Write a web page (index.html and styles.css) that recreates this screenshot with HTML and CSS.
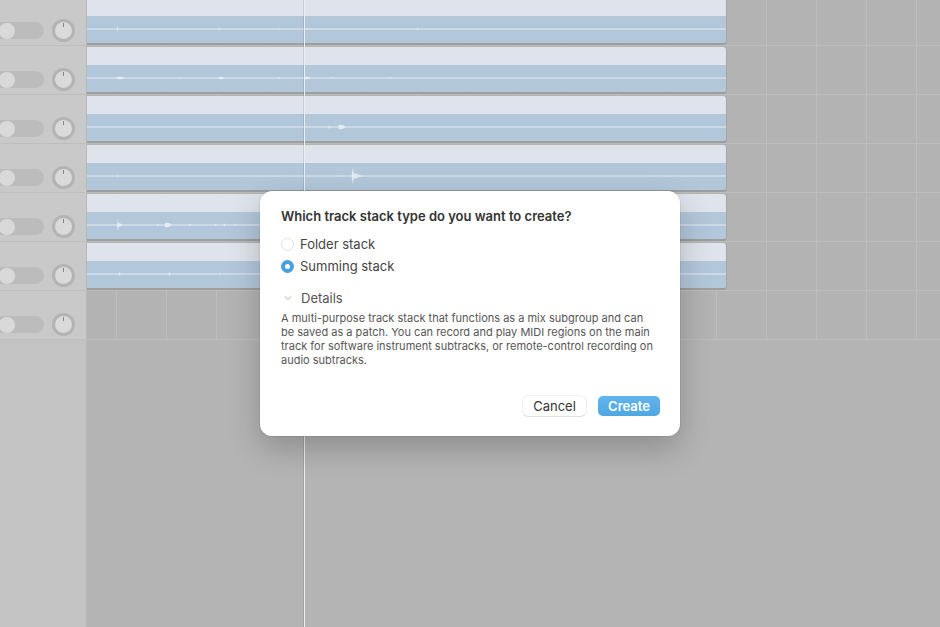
FILE: index.html
```html
<!DOCTYPE html>
<html lang="en">
<head>
  <meta charset="UTF-8">
  <title>Track Stack</title>
  <link rel="stylesheet" href="styles.css">
</head>
<body>
  <div class="app">
    <div class="headers">
      <div class="track-header"><span class="pill"><i></i></span><span class="knob"><i></i></span></div>
      <div class="track-header"><span class="pill"><i></i></span><span class="knob"><i></i></span></div>
      <div class="track-header"><span class="pill"><i></i></span><span class="knob"><i></i></span></div>
      <div class="track-header"><span class="pill"><i></i></span><span class="knob"><i></i></span></div>
      <div class="track-header"><span class="pill"><i></i></span><span class="knob"><i></i></span></div>
      <div class="track-header"><span class="pill"><i></i></span><span class="knob"><i></i></span></div>
      <div class="track-header"><span class="pill"><i></i></span><span class="knob"><i></i></span></div>
    </div>

    <div class="arrange">
      <div class="lanes">
        <div class="lane">
          <div class="region">
            <div class="region-top"></div>
            <svg class="wave" viewBox="0 0 640 27" preserveAspectRatio="none">
              <line x1="0" y1="13" x2="640" y2="13"/>
              <path d="M30 9 L31 13 L30 17 Z M132 11 L133 13 L132 15 Z M192 12 L193 13 L192 14 Z M220 12 L222 13 L220 14 Z M331 11 L332 13 L331 15 Z"/>
            </svg>
          </div>
        </div>
        <div class="lane">
          <div class="region">
            <div class="region-top"></div>
            <svg class="wave" viewBox="0 0 640 27" preserveAspectRatio="none">
              <path d="M30 12 Q34 11 38 13 Q34 15 30 14 Z M93 12 L95 13 L93 14 Z M132 12 Q135 11 138 13 Q135 15 132 14 Z M192 12 L194 13 L192 14 Z M218 12 Q221 11 224 13 Q221 15 218 14 Z M245 12 L247 13 L245 14 Z M303 12 L305 13 L303 14 Z"/>
              <line x1="0" y1="13" x2="640" y2="13"/>
            </svg>
          </div>
        </div>
        <div class="lane">
          <div class="region">
            <div class="region-top"></div>
            <svg class="wave" viewBox="0 0 640 27" preserveAspectRatio="none">
              <line x1="0" y1="13" x2="640" y2="13"/>
              <path d="M242 11 L244 13 L242 15 Z M252 11 Q256 10 259 13 Q256 16 252 15 Z"/>
            </svg>
          </div>
        </div>
        <div class="lane">
          <div class="region">
            <div class="region-top"></div>
            <svg class="wave" viewBox="0 0 640 27" preserveAspectRatio="none">
              <line x1="0" y1="13" x2="640" y2="13"/>
              <path d="M30 11 L31 13 L30 15 Z M254 12 L256 13 L254 14 Z M266 5 L268 13 L266 21 L265 13 Z M268 10 Q272 12 276 13 Q272 14 268 16 Z"/>
            </svg>
          </div>
        </div>
        <div class="lane">
          <div class="region">
            <div class="region-top"></div>
            <svg class="wave" viewBox="0 0 640 27" preserveAspectRatio="none">
              <line x1="0" y1="13" x2="640" y2="13"/>
              <path d="M31 7 L32 13 L31 19 L30 13 Z M32 11 Q35 12 36 13 Q35 14 32 15 Z M70 12 L73 13 L70 14 Z M78 11 Q82 10 85 13 Q82 16 78 15 Z M102 12 L106 13 L102 14 Z M128 12 L131 13 L128 14 Z M137 11 L139 13 L137 15 Z M148 12 L150 13 L148 14 Z"/>
            </svg>
          </div>
        </div>
        <div class="lane">
          <div class="region">
            <div class="region-top"></div>
            <svg class="wave" viewBox="0 0 640 27" preserveAspectRatio="none">
              <line x1="0" y1="13" x2="640" y2="13"/>
              <path d="M32 11 L34 13 L32 15 Z M82 11 L84 13 L82 15 Z M133 11 L134 13 L133 15 Z"/>
            </svg>
          </div>
        </div>
        <div class="lane"></div>
      </div>
      <div class="playhead"></div>
    </div>
  </div>

  <div class="dialog">
    <h1 class="dialog-title">Which track stack type do you want to create?</h1>
    <div class="options">
      <label class="option"><span class="radio"></span>Folder stack</label>
      <label class="option"><span class="radio checked"></span>Summing stack</label>
    </div>
    <div class="details">
      <svg class="chevron" viewBox="0 0 8 6"><path d="M1 1.5 L4 4.5 L7 1.5"/></svg>
      Details
    </div>
    <p class="description">A multi-purpose track stack that functions as a mix subgroup and can be saved as a patch. You can record and play MIDI regions on the main track for software instrument subtracks, or remote-control recording on audio subtracks.</p>
    <div class="buttons">
      <button class="btn">Cancel</button>
      <button class="btn primary">Create</button>
    </div>
  </div>
</body>
</html>
```

FILE: styles.css
```css
body {
  margin: 0;
  width: 940px;
  height: 627px;
  overflow: hidden;
  font-family: Inter, "Liberation Sans", sans-serif;
  background-color: #b4b4b4;
}
.app {
  display: flex;
  height: 627px;
}

/* track headers */
.headers {
  width: 87px;
  flex-shrink: 0;
  background-color: #c3c3c3;
  border-right: 1px solid #b8b8b8;
  box-sizing: border-box;
  overflow: hidden;
}
.track-header {
  height: 49px;
  box-sizing: border-box;
  padding-top: 19px;
  border-bottom: 1px solid #bebebe;
  background-color: #c9c9c9;
  display: flex;
  align-items: center;
  gap: 8px;
}
.track-header:first-child {
  margin-top: -3px;
}
.pill {
  width: 56px;
  height: 17px;
  margin-left: -12px;
  border-radius: 9px;
  background-color: #bcbcbc;
  display: flex;
  align-items: center;
  padding-left: 11px;
  box-sizing: border-box;
}
.pill i {
  width: 16px;
  height: 16px;
  border-radius: 50%;
  background-color: #d9d9d9;
}
.knob {
  width: 23px;
  height: 23px;
  border-radius: 50%;
  background-color: #b4b4b4;
  display: flex;
  align-items: center;
  justify-content: center;
}
.knob i {
  width: 17px;
  height: 17px;
  border-radius: 50%;
  background: linear-gradient(#858585, #858585) no-repeat 50% 1px / 1px 4px, #dadada;
}

/* arrange area */
.arrange {
  flex: 1;
  position: relative;
  overflow: hidden;
}
.lanes {
  margin-top: -3px;
  background-color: #b3b3b3;
  background-image: repeating-linear-gradient(90deg, transparent 0 29px, rgba(255, 255, 255, 0.14) 29px 30px, transparent 30px 50px);
}
.lane {
  height: 49px;
  box-sizing: border-box;
  border-bottom: 1px solid #bcbcbc;
  padding-top: 1px;
}
.region {
  width: 640px;
  height: 47px;
  box-sizing: border-box;
  border-bottom: 2px solid #9e9e9e;
  border-right: 1px solid #a6a6a6;
  border-radius: 0 4px 4px 0;
  background-color: #b3c7db;
  overflow: hidden;
}
.region-top {
  height: 18px;
  background-color: #dfe4ec;
}
.wave {
  display: block;
  width: 100%;
  height: 27px;
}
.wave line {
  stroke: #e4ebf3;
  stroke-width: 1;
}
.wave path {
  fill: #e4ebf3;
}
.playhead {
  position: absolute;
  top: 0;
  bottom: 0;
  left: 217px;
  width: 1px;
  background-color: #eeeeee;
  box-shadow: -1px 0 0 rgba(0, 0, 0, 0.1);
}

/* dialog */
.dialog {
  position: absolute;
  left: 260px;
  top: 191px;
  width: 420px;
  height: 245px;
  box-sizing: border-box;
  padding: 17px 20px 20px 21px;
  background-color: #ffffff;
  border-radius: 12px;
  box-shadow: 0 12px 32px rgba(0, 0, 0, 0.22), 0 0 0 1px rgba(0, 0, 0, 0.06);
  display: flex;
  flex-direction: column;
  color: #3d3d3d;
}
.dialog-title {
  margin: 0;
  font-size: 13px;
  line-height: 16px;
  font-weight: 600;
  color: #333333;
}
.options {
  margin-top: 12px;
  display: flex;
  flex-direction: column;
  gap: 6px;
}
.option {
  display: flex;
  align-items: center;
  gap: 6px;
  font-size: 13px;
  line-height: 16px;
  color: #444444;
}
.radio {
  width: 13px;
  height: 13px;
  box-sizing: border-box;
  border-radius: 50%;
  border: 1px solid #e0e0e0;
  background-color: #ffffff;
}
.radio.checked {
  border: 4px solid #4a9fe0;
  background-color: #ffffff;
}
.details {
  margin-top: 16px;
  display: flex;
  align-items: center;
  gap: 9px;
  padding-left: 3px;
  font-size: 13px;
  line-height: 16px;
  color: #555555;
}
.chevron {
  width: 8px;
  height: 6px;
}
.chevron path {
  fill: none;
  stroke: #cccccc;
  stroke-width: 1.2;
}
.description {
  margin: 5px 0 0;
  padding-right: 4px;
  font-size: 11px;
  line-height: 14px;
  color: #565656;
}
.buttons {
  margin-top: auto;
  display: flex;
  justify-content: flex-end;
  gap: 12px;
}
.btn {
  height: 20px;
  width: 63px;
  padding: 0;
  border: none;
  border-radius: 5px;
  font-family: inherit;
  font-size: 13px;
  color: #333333;
  background-color: #ffffff;
  box-shadow: 0 0 0 0.5px rgba(0, 0, 0, 0.12), 0 1px 1px rgba(0, 0, 0, 0.08);
}
.btn.primary {
  width: 62px;
  color: #ffffff;
  font-weight: 600;
  background: linear-gradient(#62b5ec, #4fa7e2);
  box-shadow: none;
}
```
